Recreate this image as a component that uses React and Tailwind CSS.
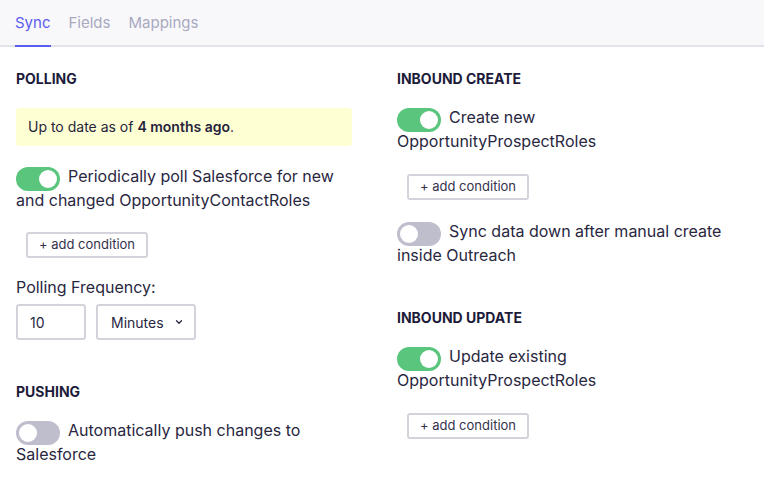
import { useState } from "react";

function Toggle({ on }) {
  return (
    <span
      className={`${
        on ? "bg-[#5ac57c]" : "bg-[#bfbecd]"
      } relative top-[1px] -my-1 mr-2 inline-block h-6 w-11 rounded-full align-middle`}
    >
      <span
        className={`${
          on ? "left-[23px]" : "left-[3px]"
        } absolute top-[3px] h-[18px] w-[18px] rounded-full bg-white`}
      />
    </span>
  );
}

function ToggleRow({ on, children }) {
  return (
    <p className="text-[16px] leading-6 text-[#29273f]">
      <Toggle on={on} />
      {children}
    </p>
  );
}

function AddCondition({ className }) {
  return (
    <button
      className={`${className} ml-2.5 h-[26px] w-[122px] rounded-[3px] border-2 border-[#d3d3dc] bg-white text-[13px] text-[#34324b]`}
    >
      + add condition
    </button>
  );
}

function Heading({ children, className }) {
  return (
    <h3 className={`${className} text-[14px] font-bold leading-4 text-[#1d1b3a]`}>
      {children}
    </h3>
  );
}

export default function App() {
  const [tab, setTab] = useState("Sync");
  const tabs = ["Sync", "Fields", "Mappings"];

  return (
    <div className="h-[488px] w-[764px] bg-white font-['Inter',sans-serif]">
      <div className="flex h-[47px] gap-[18px] border-b-2 border-[#e2e2ea] bg-[#f8f8fa] pl-[15px]">
        {tabs.map((t) => (
          <button
            key={t}
            onClick={() => setTab(t)}
            className={`${
              tab === t
                ? "border-[#5b5cf2] text-[#5b5cf2]"
                : "border-transparent text-[#a9a9c0]"
            } -mb-0.5 flex h-[47px] items-center border-b-2 pt-[2px] text-[15px]`}
          >
            {t}
          </button>
        ))}
      </div>

      <div className="flex pl-4">
        <div className="w-[336px]">
          <Heading className="mt-6">POLLING</Heading>
          <div className="mt-[21px] rounded-[3px] bg-[#ffffd4] px-3 py-2.5 text-[14px] leading-[18px] text-[#26243d]">
            Up to date as of <b className="font-semibold">4 months ago</b>.
          </div>
          <div className="mt-[18px]">
            <ToggleRow on>
              Periodically poll Salesforce for new and changed
              OpportunityContactRoles
            </ToggleRow>
          </div>
          <AddCondition className="mt-5" />
          <p className="mt-[17px] text-[16px] leading-6 text-[#29273f]">
            Polling Frequency:
          </p>
          <div className="mt-[5px] flex gap-2.5">
            <div className="flex h-9 w-[70px] items-center rounded-[3px] border-2 border-[#d3d3dc] px-3 text-[14px] text-[#29273f]">
              10
            </div>
            <div className="flex h-9 w-[100px] items-center gap-2.5 rounded-[3px] border-2 border-[#d3d3dc] pl-[13px] text-[14px] text-[#29273f]">
              Minutes
              <svg width="10" height="10" viewBox="0 0 10 10" fill="none">
                <path
                  d="M2.5 3.8 5 6.2 7.5 3.8"
                  stroke="#29273f"
                  strokeWidth="1.3"
                  strokeLinecap="round"
                  strokeLinejoin="round"
                />
              </svg>
            </div>
          </div>
          <Heading className="mt-11">PUSHING</Heading>
          <div className="mt-[18px]">
            <ToggleRow>Automatically push changes to Salesforce</ToggleRow>
          </div>
        </div>

        <div className="ml-[45px] w-[332px]">
          <Heading className="mt-6">INBOUND CREATE</Heading>
          <div className="mt-[18px]">
            <ToggleRow on>Create new OpportunityProspectRoles</ToggleRow>
          </div>
          <AddCondition className="mt-[21px]" />
          <div className="mt-[19px]">
            <ToggleRow>Sync data down after manual create inside Outreach</ToggleRow>
          </div>
          <Heading className="mt-[43px]">INBOUND UPDATE</Heading>
          <div className="mt-[18px]">
            <ToggleRow on>Update existing OpportunityProspectRoles</ToggleRow>
          </div>
          <AddCondition className="mt-[21px]" />
        </div>
      </div>
    </div>
  );
}
